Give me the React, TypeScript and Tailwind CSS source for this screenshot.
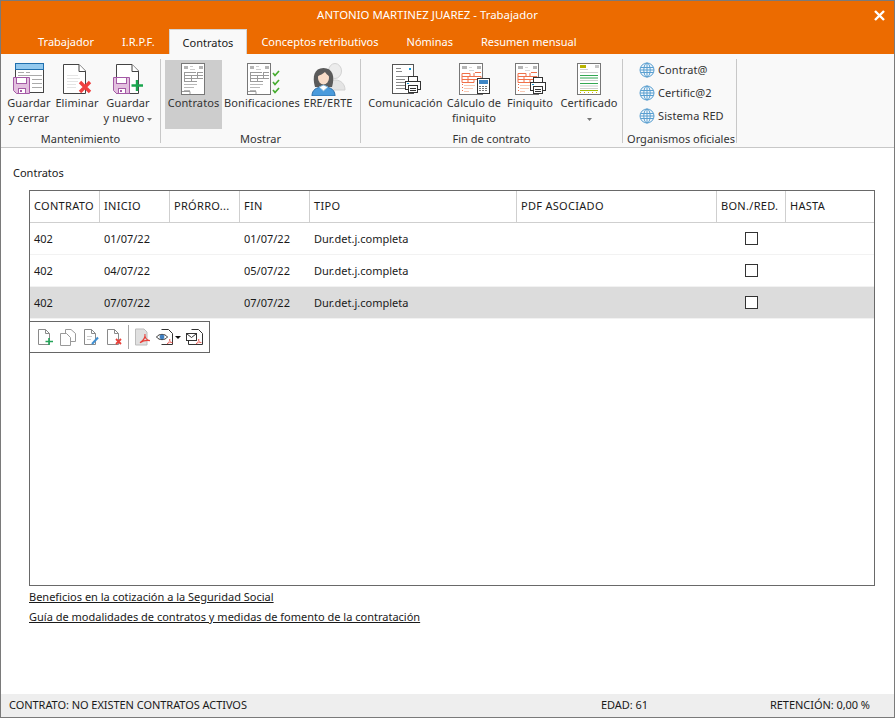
import React from 'react';

const font = { fontFamily: '"Noto Sans", "Open Sans", sans-serif' };

const Floppy: React.FC<{ x: number; y: number }> = ({ x, y }) => (
    <g transform={`translate(${x} ${y})`}>
        <path d="M0.5 0.5H16.5V16.5H3.5L0.5 13.5Z" fill="#e3bfdf" stroke="#a45aa6" />
        <rect x="3.5" y="0.5" width="10" height="6" fill="#fff" stroke="#a45aa6" />
        <rect x="5.5" y="11.5" width="7" height="5" fill="#fff" stroke="#a45aa6" />
        <rect x="7" y="13" width="2" height="2" fill="#a45aa6" />
    </g>
);

const Sheet: React.FC<{ x: number; y: number; w: number; h: number; color?: string; fold?: number }> = ({ x, y, w, h, color = '#444', fold = 7 }) => (
    <path d={`M${x + 0.5} ${y + 0.5}H${x + w - fold}L${x + w - 0.5} ${y + fold}V${y + h - 0.5}H${x + 0.5}Z`} fill="#fff" stroke={color} />
);

const FormLines: React.FC<{ x: number; y: number; color: string; soft: string }> = ({ x, y, color, soft }) => (
    <g>
        <rect x={x + 2} y={y + 2} width="4" height="3" fill="#b5b5b5" />
        <path d={`M${x + 8} ${y + 2.5}H${x + 11}M${x + 8} ${y + 5.5}H${x + 13}`} stroke="#ccc" />
        <rect x={x + 17} y={y + 2} width="4" height="3" fill="#b5b5b5" />
        <path d={`M${x + 2} ${y + 8.5}H${x + 14}M${x + 15} ${y + 8.5}H${x + 21}M${x + 2} ${y + 11.5}H${x + 21}M${x + 2} ${y + 14.5}H${x + 21}M${x + 2} ${y + 17.5}H${x + 15}M${x + 9.5} ${y + 11}V${y + 18}M${x + 15.5} ${y + 9}V${y + 15}M${x + 2.5} ${y + 8}V${y + 18}`} stroke={color} fill="none" />
        <path d={`M${x + 2} ${y + 20.5}H${x + 15}M${x + 2} ${y + 23.5}H${x + 12}M${x + 2} ${y + 26.5}H${x + 8}`} stroke={soft} fill="none" />
        <path d={`M${x + 0} ${y + 27.5}H${x + 8}V${y + 30}`} stroke={color} fill="none" />
    </g>
);

const Printer: React.FC<{ x: number; y: number }> = ({ x, y }) => (
    <g transform={`translate(${x} ${y})`} stroke="#333" fill="#fff">
        <rect x="3.5" y="0.5" width="9" height="6" />
        <rect x="0.5" y="5.5" width="15" height="8" />
        <rect x="3.5" y="9.5" width="9" height="7" />
        <path d="M5 12.5H11M5 14.5H11" />
        <rect x="2" y="7" width="2" height="1" fill="#1497d4" stroke="none" />
    </g>
);

const IconGuardarCerrar = () => (
    <svg width="34" height="36" viewBox="0 0 34 36">
        <rect x="3.5" y="4.5" width="28" height="28" fill="#fff" stroke="#444" />
        <rect x="3.5" y="3.5" width="28" height="6" fill="#93c9ee" stroke="#1f6fae" />
        <path d="M6 12.5H12M14 12.5H18M6 15.5H30M20 19.5H30M20 23.5H30M20 27.5H30" stroke="#aaa" />
        <Floppy x={1} y={17} />
    </svg>
);

const IconEliminar = () => (
    <svg width="30" height="36" viewBox="0 0 30 36">
        <Sheet x={1} y={4} w={23} h={30} />
        <path d="M17 4.5V11.5H23.5" fill="#fff" stroke="#444" />
        <path d="M5 15.5H16M5 18.5H18M5 21.5H16M5 24.5H14M5 27.5H14" stroke="#e4e4e4" />
        <path d="M18 22L28 32M28 22L18 32" stroke="#ef4141" strokeWidth="3.4" />
    </svg>
);

const IconGuardarNuevo = () => (
    <svg width="32" height="36" viewBox="0 0 32 36">
        <Sheet x={4} y={4} w={23} h={30} />
        <path d="M20 4.5V11.5H26.5" fill="#fff" stroke="#444" />
        <Floppy x={1} y={17} />
        <path d="M25 20V31M19.5 25.5H31" stroke="#1aa64e" strokeWidth="2.4" />
    </svg>
);

const IconContrato = () => (
    <svg width="24" height="36" viewBox="0 0 24 36">
        <rect x="0.5" y="3.5" width="23" height="31" fill="#fff" stroke="#777" />
        <FormLines x={1} y={4} color="#9a9a9a" soft="#b8b8b8" />
    </svg>
);

const IconBonificaciones = () => (
    <svg width="34" height="36" viewBox="0 0 34 36">
        <rect x="0.5" y="3.5" width="23" height="31" fill="#fff" stroke="#777" />
        <FormLines x={1} y={4} color="#9a9a9a" soft="#b8b8b8" />
        <path d="M26 13L28 15.5L32 11M26 22L28 24.5L32 20M26 30L28 32.5L32 28" stroke="#46ad2f" strokeWidth="1.7" fill="none" />
    </svg>
);

const IconEre = () => (
    <svg width="36" height="36" viewBox="0 0 36 36">
        <ellipse cx="25" cy="11" rx="6.5" ry="7.5" fill="#ececec" stroke="#d2d2d2" />
        <path d="M14 30C14 23 20 20 25 20C31 20 35 24 35 30Z" fill="#e4e4e4" stroke="#d2d2d2" />
        <path d="M5 27C2 17 4 8 13.5 8C23 8 25 17 22 27Z" fill="#5b5b5b" />
        <ellipse cx="13.5" cy="18" rx="5.5" ry="6.5" fill="#f8dcc8" />
        <path d="M8 16C10 15 13 14 15 12C16 14 18 15 19 16L19 12L13 10L8 12Z" fill="#5b5b5b" />
        <path d="M2 36C2 30 6 27 13.5 27C21 27 25 30 25 36Z" fill="#4a9bdc" stroke="#2d6ea8" />
        <path d="M9 27L13.5 31L18 27L13.5 25Z" fill="#fff" stroke="#7fb4dc" />
    </svg>
);

const IconComunicacion = () => (
    <svg width="30" height="36" viewBox="0 0 30 36">
        <rect x="1.5" y="4.5" width="21" height="29" fill="#fff" stroke="#555" />
        <rect x="18" y="8" width="2" height="2" fill="#1497d4" />
        <path d="M5 8.5H10M5 11.5H11M5 16.5H18M5 19.5H14M5 22.5H14M5 25.5H14M5 28.5H14" stroke="#8a8a8a" />
        <Printer x={14} y={16} />
    </svg>
);

const OrangeDoc = () => (
    <g>
        <rect x="0.5" y="3.5" width="23" height="31" fill="#fff" stroke="#777" />
        <rect x="3" y="6" width="5" height="3" fill="#b5b5b5" />
        <rect x="18" y="6" width="4" height="3" fill="#b5b5b5" />
        <path d="M10 7.5H13M10 10.5H15" stroke="#d8d8d8" fill="none" />
        <path d="M16 12.5H22M3 13.5H11V16.5H22V19.5H15V22.5H3ZM3 16.5H11M3 19.5H15M9 17V22M15 13V16" stroke="#f0714a" fill="none" />
        <path d="M5 25.5H16M5 28.5H14M5 31.5H10" stroke="#f9c9b4" fill="none" />
        <path d="M3.5 24V32" stroke="#f0714a" strokeDasharray="1 2" />
    </g>
);

const IconCalculo = () => (
    <svg width="32" height="36" viewBox="0 0 32 36">
        <OrangeDoc />
        <rect x="18.5" y="18.5" width="12" height="15" fill="#fff" stroke="#333" />
        <rect x="20" y="20" width="9" height="4" fill="#3d86c6" />
        <path d="M20 26.5H29M20 28.5H29M20 30.5H29" stroke="#777" strokeDasharray="2 1" />
    </svg>
);

const IconFiniquito = () => (
    <svg width="32" height="36" viewBox="0 0 32 36">
        <OrangeDoc />
        <Printer x={15} y={17} />
    </svg>
);

const IconCertificado = () => (
    <svg width="24" height="36" viewBox="0 0 24 36">
        <rect x="0.5" y="3.5" width="23" height="31" fill="#fff" stroke="#777" />
        <rect x="3" y="5" width="6" height="3" fill="#b7b200" />
        <rect x="18" y="5" width="4" height="3" fill="#c8c8c8" />
        <path d="M3 9.5H11M3 12.5H21M3 20.5H21M3 28.5H21" stroke="#cfcfcf" />
        <path d="M3 15.5H21M3 18H21M3 23.5H21" stroke="#34a853" />
        <path d="M3 26H21" stroke="#cfcfcf" />
        <path d="M3 30.5H21" stroke="#a4bf00" />
        <path d="M3 32.5H21" stroke="#d8b400" strokeDasharray="1 3" />
    </svg>
);

const Globe = () => (
    <svg width="16" height="16" viewBox="0 0 16 16" fill="none" stroke="#5a9fd0">
        <circle cx="8" cy="8" r="7" fill="#f0f7fc" />
        <ellipse cx="8" cy="8" rx="3.2" ry="7" />
        <path d="M8 1V15M1.5 5.5H14.5M1.5 10.5H14.5M1 8H15" />
    </svg>
);

const Caret = () => (
    <svg width="5" height="3" viewBox="0 0 5 3" className="inline-block align-middle"><path d="M0 0H5L2.5 3Z" fill="#777" /></svg>
);

const RibbonButton: React.FC<{ w: string; icon: React.ReactNode; lines: React.ReactNode[]; active?: boolean }> = ({ w, icon, lines, active }) => (
    <div className={`${w} h-[69px] mt-[1px] flex flex-col items-center shrink-0 ${active ? 'bg-[#cdcdcd]' : ''}`}>
        <div className="h-[35px] flex justify-center">{icon}</div>
        {lines.map((line, i) => (
            <div key={i} className="h-[15px] leading-[15px] whitespace-nowrap text-center">{line}</div>
        ))}
    </div>
);

const RibbonGroup: React.FC<{ w: string; label: string; pad?: string; labelPad?: string; children: React.ReactNode }> = ({ w, label, pad = '', labelPad = '', children }) => (
    <div className={`${w} shrink-0 h-[84px] flex flex-col border-r border-[#c8c8c8]`}>
        <div className={`h-[69px] flex ${pad}`}>{children}</div>
        <div className={`mt-auto -mb-[3px] h-[15px] leading-[15px] text-center whitespace-nowrap tracking-normal ${labelPad}`}>{label}</div>
    </div>
);

const SmallDoc: React.FC<{ children?: React.ReactNode; w?: number; color?: string }> = ({ children, w = 16, color = '#8a8a8a' }) => (
    <svg width={w} height="18" viewBox={`0 0 ${w} 18`} fill="none">
        <path d="M0.5 1.5H7.5L11.5 5.5V16.5H0.5Z" fill="#fff" stroke={color} />
        <path d="M7.5 1.5V5.5H11.5" stroke={color} />
        {children}
    </svg>
);

const PdfMark: React.FC<{ x: number; y: number; s?: number }> = ({ x, y, s = 1 }) => (
    <path transform={`translate(${x} ${y}) scale(${s})`} d="M0 8C3 6 5 3 4.5 0C4 3 6 6 9 6C6 5.5 3 6 0 8Z" stroke="#e8413a" fill="none" />
);

const columns = ['w-[70px]', 'w-[70px]', 'w-[70px]', 'w-[70px]', 'w-[207px]', 'w-[200px]', 'w-[69px]', 'flex-1'];
const headers = ['CONTRATO', 'INICIO', 'PRÓRRO...', 'FIN', 'TIPO', 'PDF ASOCIADO', 'BON./RED.', 'HASTA'];
const rows = [
    { contrato: '402', inicio: '01/07/22', fin: '01/07/22', tipo: 'Dur.det.j.completa' },
    { contrato: '402', inicio: '04/07/22', fin: '05/07/22', tipo: 'Dur.det.j.completa' },
    { contrato: '402', inicio: '07/07/22', fin: '07/07/22', tipo: 'Dur.det.j.completa', selected: true },
];
const tabs = ['Trabajador', 'I.R.P.F.', 'Contratos', 'Conceptos retributivos', 'Nóminas', 'Resumen mensual'];

export default function App() {
    return (
        <div style={font} className="w-[895px] h-[718px] flex flex-col overflow-hidden bg-white border border-[#7a7a7a] text-[11px] text-[#1a1a1a]">
            {/* title */}
            <div className="h-[53px] bg-[#ec6b00] shrink-0 flex flex-col text-white">
                <div className="h-[28px] flex items-center">
                    <div className="w-[853px] text-center text-[11.4px]">ANTONIO MARTINEZ JUAREZ - Trabajador</div>
                    <svg className="ml-[20px]" width="11" height="11" viewBox="0 0 11 11"><path d="M1 1L10 10M10 1L1 10" stroke="#fff" strokeWidth="2.4" /></svg>
                </div>
                <div className="h-[25px] flex pl-[23px]">
                    {tabs.map(tab => (
                        <div key={tab} className={`leading-[26px] ${tab === 'Contratos' ? 'bg-[#f9f9f9] text-[#1a1a1a] border-x border-t border-[#d4d4d4] px-[13px]' : 'px-[14px]'}`}>{tab}</div>
                    ))}
                </div>
            </div>

            {/* ribbon */}
            <div className="h-[94px] shrink-0 bg-[#f9f9f9] border-b border-[#c8c8c8] flex pt-[5px] pb-[4px] tracking-[0.1px] text-[#333]">
                <RibbonGroup w="w-[160px]" label="Mantenimiento" pad="pl-[4px]">
                    <RibbonButton w="w-[48px]" icon={<IconGuardarCerrar />} lines={['Guardar', 'y cerrar']} />
                    <RibbonButton w="w-[48px]" icon={<IconEliminar />} lines={['Eliminar']} />
                    <RibbonButton w="w-[54px]" icon={<IconGuardarNuevo />} lines={['Guardar', <>y nuevo <Caret /></>]} />
                </RibbonGroup>
                <RibbonGroup w="w-[200px]" label="Mostrar" pad="pl-[4px]">
                    <RibbonButton w="w-[57px]" active icon={<div className="pr-[1px]"><IconContrato /></div>} lines={['Contratos']} />
                    <RibbonButton w="w-[80px]" icon={<div className="pl-[3px]"><IconBonificaciones /></div>} lines={['Bonificaciones']} />
                    <RibbonButton w="w-[52px]" icon={<IconEre />} lines={['ERE/ERTE']} />
                </RibbonGroup>
                <RibbonGroup w="w-[262px]" label="Fin de contrato" pad="pl-[5px]">
                    <RibbonButton w="w-[79px]" icon={<IconComunicacion />} lines={['Comunicación']} />
                    <RibbonButton w="w-[58px]" icon={<div className="pl-[2px]"><IconCalculo /></div>} lines={['Cálculo de', 'finiquito']} />
                    <RibbonButton w="w-[54px]" icon={<div className="pl-[2px]"><IconFiniquito /></div>} lines={['Finiquito']} />
                    <RibbonButton w="w-[64px]" icon={<IconCertificado />} lines={['Certificado', <Caret />]} />
                </RibbonGroup>
                <RibbonGroup w="w-[114px]" label="Organismos oficiales" labelPad="pl-[3px]">
                    <div className="flex flex-col pl-[16px] gap-[7px] pt-[3px]">
                        {['Contrat@', 'Certific@2', 'Sistema RED'].map(label => (
                            <div key={label} className="flex items-center gap-[3px] h-[16px]"><Globe />{label}</div>
                        ))}
                    </div>
                </RibbonGroup>
            </div>

            {/* body */}
            <div className="flex-1 flex flex-col min-h-0">
                <div className="pl-[12px] pt-[17px] h-[42px] leading-[16px]">Contratos</div>

                <div className="ml-[28px] w-[846px] h-[396px] border border-[#696969] relative shrink-0">
                    <div className="flex h-[32px] border-b border-[#cfcfcf] tracking-[0.3px]">
                        {headers.map((h, i) => (
                            <div key={h} className={`${columns[i]} px-[4px] leading-[30px] whitespace-nowrap ${i < 7 ? 'border-r border-[#cfcfcf]' : ''}`}>{h}</div>
                        ))}
                    </div>
                    {rows.map((r, idx) => (
                        <div key={idx} className={`flex h-[32px] items-center border-b border-[#f2f2f2] ${r.selected ? 'bg-[#dcdcdc]' : ''}`}>
                            <div className={`${columns[0]} px-[4px] pt-[2px]`}>{r.contrato}</div>
                            <div className={`${columns[1]} px-[4px] pt-[2px]`}>{r.inicio}</div>
                            <div className={columns[2]} />
                            <div className={`${columns[3]} px-[4px] pt-[2px]`}>{r.fin}</div>
                            <div className={`${columns[4]} px-[4px] pt-[2px]`}>{r.tipo}</div>
                            <div className={columns[5]} />
                            <div className={`${columns[6]} flex justify-center`}>
                                <div className="w-[13px] h-[13px] border border-[#333] bg-white" />
                            </div>
                            <div className={columns[7]} />
                        </div>
                    ))}

                    {/* row toolbar */}
                    <div className="absolute left-[-1px] top-[130px] w-[181px] h-[32px] bg-white border border-[#666] flex items-center pl-[8px]">
                        <div className="w-[22px]"><SmallDoc><path d="M11 10V17M7.5 13.5H15" stroke="#25a45a" strokeWidth="1.6" /></SmallDoc></div>
                        <div className="w-[24px]">
                            <svg width="16" height="18" viewBox="0 0 16 18" fill="none" stroke="#9a9a9a">
                                <path d="M5.5 1.5H11L15.5 5.5V13.5H5.5Z" fill="#fff" />
                                <path d="M0.5 5.5H6.5L10.5 9.5V17.5H0.5Z" fill="#fff" />
                            </svg>
                        </div>
                        <div className="w-[23px]"><SmallDoc><path d="M3 8.5H8M3 11.5H7" stroke="#ccc" /><path d="M8 16L14 9.5" stroke="#3f8fd2" strokeWidth="2" /></SmallDoc></div>
                        <div className="w-[21px]"><SmallDoc><path d="M9 11L14 16M14 11L9 16" stroke="#e8413a" strokeWidth="1.8" /></SmallDoc></div>
                        <div className="w-px h-[24px] bg-[#a8a8a8] mr-[6px]" />
                        <div className="w-[21px]">
                            <svg width="16" height="18" viewBox="0 0 16 18">
                                <path d="M0.5 1H9L12 4V17H0.5Z" fill="#e0e0e0" stroke="#bdbdbd" />
                                <PdfMark x={5} y={6} s={1.1} />
                            </svg>
                        </div>
                        <div className="w-[30px] flex items-center">
                            <svg width="19" height="18" viewBox="0 0 19 18" fill="none">
                                <path d="M5.5 1.5H12.5L16.5 5.5V16.5H5.5" fill="#fff" stroke="#333" />
                                <path d="M0.5 9C3 5.5 9 5.5 11.5 9C9 12.5 3 12.5 0.5 9Z" fill="#fff" stroke="#333" />
                                <circle cx="6" cy="9" r="2.4" fill="#3f7fc0" />
                                <PdfMark x={11} y={11} s={0.6} />
                            </svg>
                            <svg width="6" height="3" viewBox="0 0 6 3"><path d="M0 0H6L3 3Z" fill="#111" /></svg>
                        </div>
                        <div>
                            <svg width="18" height="18" viewBox="0 0 18 18" fill="none">
                                <path d="M5.5 1.5H12.5L16.5 5.5V16.5H2.5V13" fill="#fff" stroke="#333" />
                                <rect x="0.5" y="5.5" width="10" height="7" fill="#fff" stroke="#333" />
                                <path d="M1 6L5.5 9.5L10 6" stroke="#333" />
                                <PdfMark x={10} y={11} s={0.6} />
                            </svg>
                        </div>
                    </div>
                </div>

                <div className="ml-[28px] mt-[1px] h-[20px] leading-[20px]"><span className="underline">Beneficios en la cotización a la Seguridad Social</span></div>
                <div className="ml-[28px] h-[20px] leading-[20px]"><span className="underline">Guía de modalidades de contratos y medidas de fomento de la contratación</span></div>

                <div className="mt-auto h-[23px] bg-[#eeeeee] flex items-center pl-[8px] shrink-0 tracking-[-0.05px]">
                    <div className="w-[592px]">CONTRATO: NO EXISTEN CONTRATOS ACTIVOS</div>
                    <div className="w-[169px]">EDAD: 61</div>
                    <div>RETENCIÓN: 0,00 %</div>
                </div>
            </div>
        </div>
    );
}
